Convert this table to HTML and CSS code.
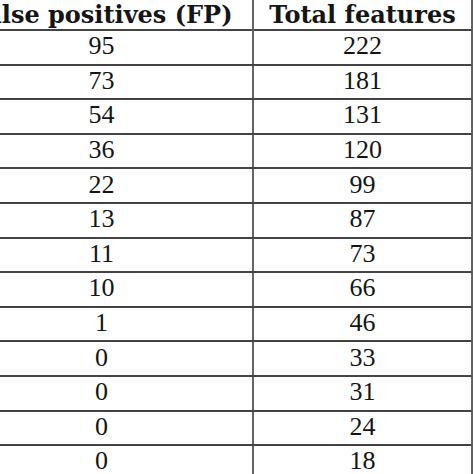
FILE: index.html
```html
<!DOCTYPE html>
<html>
<head>
<meta charset="utf-8">
<link rel="stylesheet" href="styles.css">
</head>
<body>
<div class="table">
  <div class="row head"><div class="cell">False positives (FP)</div><div class="cell">Total features</div></div>
  <div class="row"><div class="cell">95</div><div class="cell">222</div></div>
  <div class="row"><div class="cell">73</div><div class="cell">181</div></div>
  <div class="row"><div class="cell">54</div><div class="cell">131</div></div>
  <div class="row"><div class="cell">36</div><div class="cell">120</div></div>
  <div class="row"><div class="cell">22</div><div class="cell">99</div></div>
  <div class="row"><div class="cell">13</div><div class="cell">87</div></div>
  <div class="row"><div class="cell">11</div><div class="cell">73</div></div>
  <div class="row"><div class="cell">10</div><div class="cell">66</div></div>
  <div class="row"><div class="cell">1</div><div class="cell">46</div></div>
  <div class="row"><div class="cell">0</div><div class="cell">33</div></div>
  <div class="row"><div class="cell">0</div><div class="cell">31</div></div>
  <div class="row"><div class="cell">0</div><div class="cell">24</div></div>
  <div class="row"><div class="cell">0</div><div class="cell">18</div></div>
</div>
</body>
</html>
```
FILE: styles.css
```css
html, body {
  margin: 0;
  padding: 0;
  background: #fff;
  overflow: hidden;
}
.table {
  margin-left: -49px;
  width: 522px;
  font-family: "Liberation Serif", "DejaVu Serif", serif;
  font-size: 26px;
  color: #151515;
}
.row {
  display: grid;
  grid-template-columns: 301px 219px;
  height: 34.6px;
  box-sizing: border-box;
  border-bottom: 2px solid #444;
  border-right: 2px solid #666;
}
.cell {
  display: flex;
  align-items: center;
  justify-content: center;
  white-space: nowrap;
  padding-bottom: 2px;
}
.cell + .cell {
  border-left: 2px solid #666;
}
.head {
  height: 31px;
  font-family: "DejaVu Serif", serif;
  font-size: 24px;
  font-weight: bold;
}
.head .cell {
  align-items: flex-start;
  padding-top: 0;
}
```
